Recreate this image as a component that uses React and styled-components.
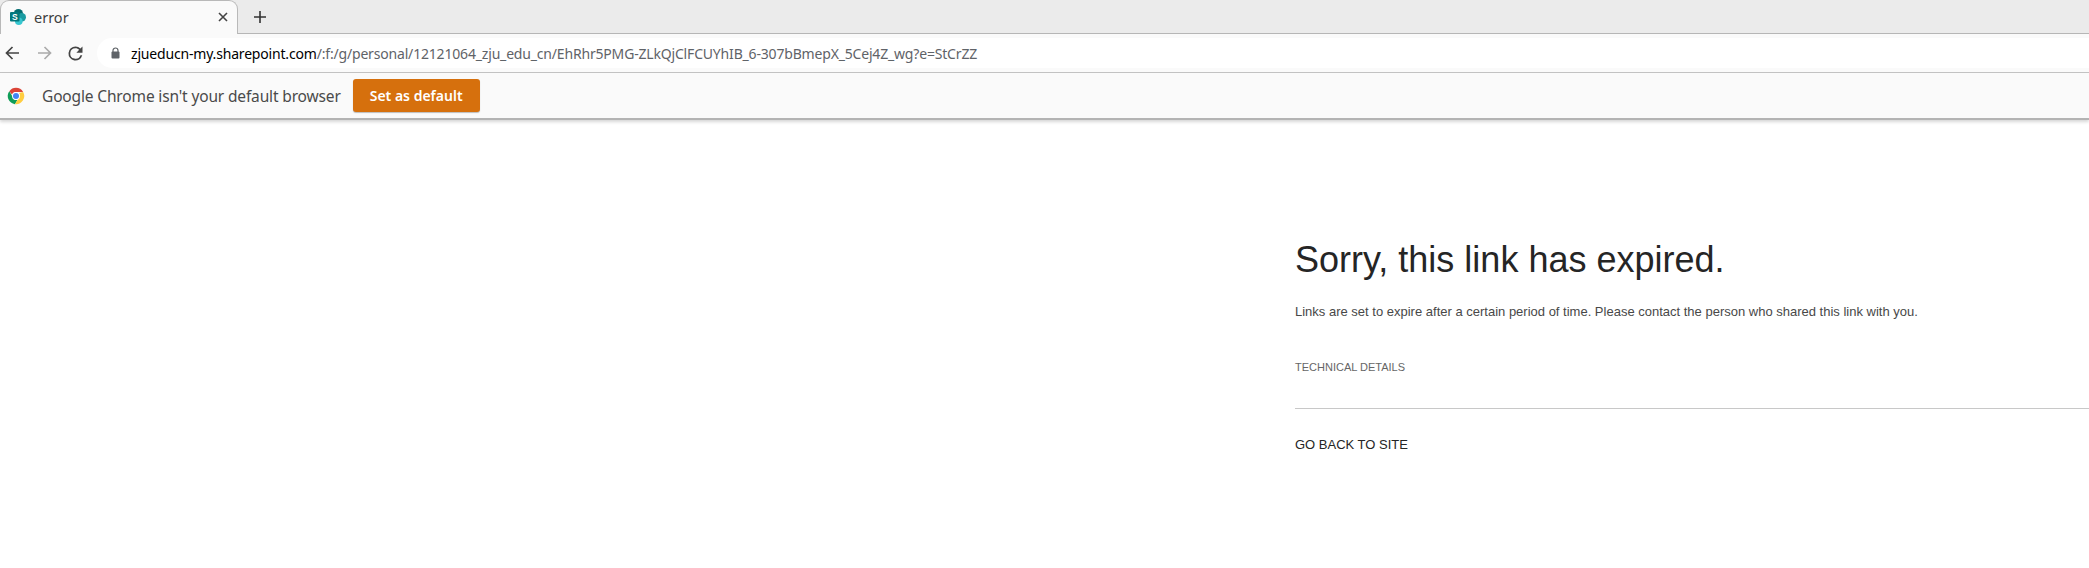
import React from "react";
import styled, { createGlobalStyle } from "styled-components";

const Global = createGlobalStyle`
  html, body { margin: 0; padding: 0; background: #fff; }
  body { width: 2089px; height: 568px; overflow: hidden; font-family: "Liberation Sans", Arial, sans-serif; }
`;
const UI = `"Noto Sans", "Open Sans", sans-serif`;

const Page = styled.div`
  width: 2089px; height: 568px; display: flex; flex-direction: column; background: #fff; overflow: hidden;
`;
const TabStrip = styled.div`
  height: 34px; box-sizing: border-box; background: #ebebeb; border-bottom: 1px solid #b6b6b6;
  display: flex; align-items: flex-end; padding-top: 1px; flex: none;
`;
const Tab = styled.div`
  width: 238px; height: 34px; margin-bottom: -1px; box-sizing: border-box; background: #fafafa;
  border: 1px solid #b9b9b9; border-bottom: none; border-radius: 9px 9px 0 0;
  display: flex; align-items: center; padding: 0 7px 2px 9px; gap: 8px; position: relative; z-index: 1;
`;
const TabTitle = styled.span`
  flex: 1; font: 14.5px ${UI}; color: #3f3f3f;
`;
const TabClose = styled.div`display: flex; margin-right: 2px;`;
const NewTab = styled.div`
  margin: 0 0 0 13px; height: 33px; display: flex; align-items: center; width: 18px; justify-content: center;
`;
const Toolbar = styled.div`
  height: 39px; box-sizing: border-box; flex: none; background: #fafafa; border-bottom: 1px solid #c4c4c4;
  display: flex; align-items: center; padding-left: 5px;
`;
const NavIcon = styled.div`
  width: ${p => p.$width}px; height: 21px; display: flex; align-items: center; margin-right: ${p => p.$gap}px;
`;
const Omnibox = styled.div`
  flex: 1; height: 30px; background: #fff; border-radius: 15px 0 0 15px; display: flex; align-items: center;
  padding-left: 14px; gap: 11px; margin-left: 11px;
`;
const Url = styled.div`
  font: 14px ${UI}; color: #5f6368; white-space: nowrap; letter-spacing: -0.18px;
  b { font-weight: 400; color: #000; }
`;
const Infobar = styled.div`
  height: 47px; box-sizing: border-box; flex: none; background: #fafafa; border-bottom: 2px solid #b3b3b3;
  box-shadow: 0 2px 3px rgba(0,0,0,0.16); display: flex; align-items: center; padding-left: 7px;
  position: relative; z-index: 1;
`;
const InfoText = styled.span`
  font: 15.5px ${UI}; color: #4a4a4a; margin-left: 17px; letter-spacing: -0.15px;
`;
const DefaultButton = styled.button`
  margin-left: 12px; width: 127px; height: 33px; box-sizing: border-box; border: none; border-radius: 3px;
  background: #d6700d; color: #fff; font: 600 14px ${UI}; padding: 0; box-shadow: 0 1px 1px rgba(0,0,0,.25);
`;
const Content = styled.main`
  flex: 1; padding: 118px 0 0 1295px; min-width: 0;
`;
const Heading = styled.h1`
  margin: 0; font: 400 36px/44px "Liberation Sans", Arial, sans-serif; color: #252525; white-space: nowrap;
`;
const Message = styled.p`
  margin: 22px 0 0; font: 13px/16px "Liberation Sans", Arial, sans-serif; color: #484848; white-space: nowrap;
`;
const Details = styled.div`
  margin-top: 40px; font: 11px/14px "Liberation Sans", Arial, sans-serif; color: #666; text-transform: uppercase;
`;
const Divider = styled.hr`
  margin: 34px 0 0; border: none; border-top: 1px solid #c8c8c8; height: 0;
`;
const BackLink = styled.a`
  display: block; margin-top: 28px; font: 13px/16px "Liberation Sans", Arial, sans-serif; color: #252525;
  text-transform: uppercase;
`;

const SharePoint = () => (
  <svg width="16" height="16" viewBox="0 0 16 16">
    <circle cx="8.4" cy="4.6" r="4.6" fill="#036c70" />
    <circle cx="11.8" cy="8.2" r="4.2" fill="#1a9ba1" />
    <circle cx="8.8" cy="12.2" r="3.8" fill="#37c6d0" />
    <rect x="0" y="3" width="9.5" height="9.5" rx="1" fill="#03787c" />
    <text x="4.8" y="10.9" textAnchor="middle" fontSize="8.5" fontWeight="700" fontFamily="Liberation Sans" fill="#fff">S</text>
  </svg>
);
const Close = () => (
  <svg width="10" height="10" viewBox="0 0 10 10"><path d="M1 1l8 8M9 1L1 9" stroke="#444" strokeWidth="1.6" /></svg>
);
const Plus = () => (
  <svg width="12" height="12" viewBox="0 0 12 12"><path d="M6 0v12M0 6h12" stroke="#333" strokeWidth="1.6" /></svg>
);
const Arrow = ({ color, flip }) => (
  <svg width="15" height="14" viewBox="0 0 15 14" style={{ transform: flip ? "scaleX(-1)" : undefined }}>
    <path d="M14 7H2M7.5 1L1.5 7l6 6" fill="none" stroke={color} strokeWidth="1.7" />
  </svg>
);
const Reload = () => (
  <svg width="21" height="21" viewBox="0 0 24 24">
    <path fill="#444" d="M17.65 6.35A7.96 7.96 0 0 0 12 4a8 8 0 1 0 7.74 10h-2.08A6 6 0 1 1 12 6c1.66 0 3.14.69 4.22 1.78L13 11h7V4l-2.35 2.35z" />
  </svg>
);
const Lock = () => (
  <svg width="9" height="12" viewBox="0 0 9 12">
    <path d="M2 5V3.5a2.5 2.5 0 0 1 5 0V5" fill="none" stroke="#5f6368" strokeWidth="1.2" />
    <rect x="0.5" y="4.5" width="8" height="7" rx="1" fill="#5f6368" />
  </svg>
);
const Chrome = () => (
  <svg width="18" height="18" viewBox="0 0 48 48">
    <path fill="#db4437" d="M24 2a22 22 0 0 1 19 11H24a11 11 0 0 0-10.4 7.5L6.2 11A22 22 0 0 1 24 2z" />
    <path fill="#0f9d58" d="M6.2 11l9 15.8A11 11 0 0 0 28 34.3L21.2 45.8A22 22 0 0 1 6.2 11z" />
    <path fill="#ffcd40" d="M43 13A22 22 0 0 1 21.2 45.8L31 29a11 11 0 0 0 .5-13z" />
    <circle cx="24" cy="24" r="10.5" fill="#fff" />
    <circle cx="24" cy="24" r="8" fill="#4285f4" />
  </svg>
);

export default function App() {
  return (
    <Page>
      <Global />
      <TabStrip>
        <Tab>
          <SharePoint />
          <TabTitle>error</TabTitle>
          <TabClose><Close /></TabClose>
        </Tab>
        <NewTab><Plus /></NewTab>
      </TabStrip>
      <Toolbar>
        <NavIcon $width={16} $gap={16}><Arrow color="#444" /></NavIcon>
        <NavIcon $width={16} $gap={12}><Arrow color="#ababab" flip /></NavIcon>
        <NavIcon $width={21} $gap={0}><Reload /></NavIcon>
        <Omnibox>
          <Lock />
          <Url><b>zjueducn-my.sharepoint.com</b>/:f:/g/personal/12121064_zju_edu_cn/EhRhr5PMG-ZLkQjClFCUYhIB_6-307bBmepX_5Cej4Z_wg?e=StCrZZ</Url>
        </Omnibox>
      </Toolbar>
      <Infobar>
        <Chrome />
        <InfoText>Google Chrome isn't your default browser</InfoText>
        <DefaultButton>Set as default</DefaultButton>
      </Infobar>
      <Content>
        <Heading>Sorry, this link has expired.</Heading>
        <Message>Links are set to expire after a certain period of time. Please contact the person who shared this link with you.</Message>
        <Details>Technical Details</Details>
        <Divider />
        <BackLink>Go back to site</BackLink>
      </Content>
    </Page>
  );
}
